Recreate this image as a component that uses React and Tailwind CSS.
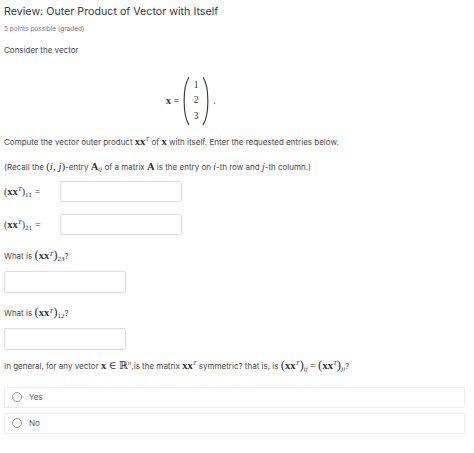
import React from 'react';

const serif = { fontFamily: '"Liberation Serif", "DejaVu Serif", serif' };

// bold x as in MathJax \mathbf{x}
const X = () => <span className="font-bold" style={serif}>x</span>;

// (xx^T) with optional large parens and subscript
const XXT = ({ sub, big, italicSub }) => (
  <span className="whitespace-nowrap text-[#333]" style={serif}>
    <span className={big ? 'text-[13px] leading-none' : 'text-[10px]'}>(</span>
    <span className="text-[10.5px] font-bold">xx</span>
    <sup className="text-[7px] italic">T</sup>
    <span className={big ? 'text-[13px] leading-none' : 'text-[10px]'}>)</span>
    {sub && <sub className={`text-[7px] ${italicSub ? 'italic' : ''}`}>{sub}</sub>}
  </span>
);

const Paren = ({ flip }) => (
  <svg width="8" height="50" viewBox="0 0 8 50" className={flip ? 'scale-x-[-1]' : ''}>
    <path d="M7 1 C0.5 11 0.5 39 7 49" fill="none" stroke="#333" strokeWidth="1.1" />
  </svg>
);

const Input = ({ className }) => (
  <div className={`w-[122px] rounded-[2px] border border-[#dcdcdc] bg-white ${className || 'h-[21px]'}`} />
);

const Option = ({ label }) => (
  <div className="flex h-[21px] items-center gap-[7px] rounded-[2px] border border-[#ececec] bg-white pl-[7px]">
    <div className="h-[10px] w-[10px] rounded-full border border-[#9a9a9a]" />
    <span className="text-[8px] text-[#555]">{label}</span>
  </div>
);

export default function App() {
  return (
    <div className="min-h-[453px] bg-white px-[4px] pt-[4px] text-[#484848]" style={{ fontFamily: 'Inter, "Open Sans", sans-serif' }}>
      <h2 className="text-[10.7px] leading-[16px] text-[#3a3a3a]">Review: Outer Product of Vector with Itself</h2>
      <p className="mt-[5px] text-[6.5px] text-[#777]">5 points possible (graded)</p>
      <p className="mt-[9px] text-[8px]">Consider the vector</p>

      <div className="mt-[20px] flex items-center gap-[3px] pl-[162px]">
        <span className="text-[10px] text-[#333]" style={serif}><X /> =</span>
        <div className="flex items-center">
          <Paren />
          <div className="flex w-[12px] flex-col items-center text-[9.5px] leading-[15.5px] text-[#333]" style={serif}>
            <span>1</span>
            <span>2</span>
            <span>3</span>
          </div>
          <Paren flip />
        </div>
        <span className="text-[10px]" style={serif}>.</span>
      </div>

      <p className="mt-[8px] text-[8px]">
        Compute the vector outer product <span className="font-bold text-[10.5px] text-[#333]" style={serif}>xx</span>
        <sup className="text-[7px] italic" style={serif}>T</sup> of <span className="text-[10.5px] text-[#333]"><X /></span> with itself. Enter the requested entries below.
      </p>
      <p className="mt-[8px] text-[8px]">
        (Recall the <span className="text-[11px] text-[#333]" style={serif}>(<i>i</i>, <i>j</i>)</span>-entry{' '}
        <span className="text-[10.5px] font-bold text-[#333]" style={serif}>A</span><sub className="text-[7px] italic" style={serif}>ij</sub> of a matrix{' '}
        <span className="text-[10.5px] font-bold text-[#333]" style={serif}>A</span> is the entry on <i className="text-[10px]" style={serif}>i</i>-th row and{' '}
        <i className="text-[10px]" style={serif}>j</i>-th column.)
      </p>

      <div className="mt-[7px] flex items-center">
        <div className="w-[56px] text-[10px]"><XXT sub="11" /> <span style={serif}>=</span></div>
        <Input />
      </div>
      <div className="mt-[12px] flex items-center">
        <div className="w-[56px] text-[10px]"><XXT sub="21" /> <span style={serif}>=</span></div>
        <Input />
      </div>

      <p className="mt-[13px] text-[8px]">What is <XXT sub="23" big />?</p>
      <Input className="mt-[7px] h-[22px]" />

      <p className="mt-[12px] text-[8px]">What is <XXT sub="12" big />?</p>
      <Input className="mt-[7px] h-[22px]" />

      <p className="mt-[8px] text-[8px]">
        In general, for any vector <span className="text-[10.5px] text-[#333]" style={serif}><X /> ∈ ℝ</span>
        <sup className="text-[7px] italic" style={serif}>n</sup>,is the matrix{' '}
        <span className="font-bold text-[10.5px] text-[#333]" style={serif}>xx</span><sup className="text-[7px] italic" style={serif}>T</sup> symmetric? that is, is{' '}
        <XXT sub="ij" big italicSub /> <span className="text-[10.5px]" style={serif}>=</span> <XXT sub="ji" big italicSub />?
      </p>

      <div className="mt-[13px] flex w-[461px] flex-col gap-[5px]">
        <Option label="Yes" />
        <Option label="No" />
      </div>
    </div>
  );
}
